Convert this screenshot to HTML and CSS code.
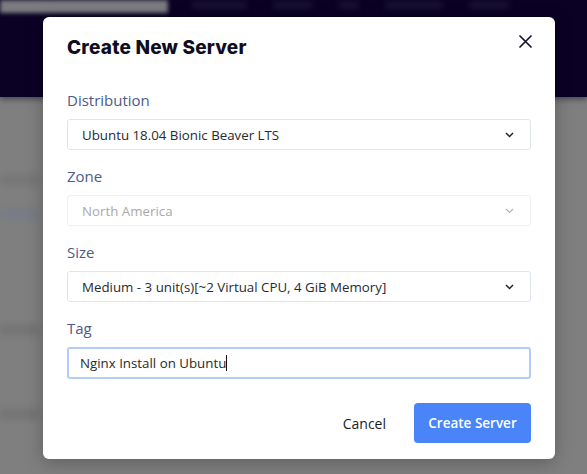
FILE: index.html
```html
<!DOCTYPE html>
<html>
<head>
<meta charset="utf-8">
<link rel="stylesheet" href="styles.css">
</head>
<body>
<div class="page">
  <div class="topbar">
    <div class="search"></div>
    <div class="nav">
      <span class="nav-item w1"></span>
      <span class="nav-item w2"></span>
      <span class="nav-item w3"></span>
      <span class="nav-item w4"></span>
      <span class="nav-item w2"></span>
    </div>
  </div>
  <div class="content">
    <div class="ghost g1"></div>
    <div class="ghost g2"></div>
    <div class="ghost g3"></div>
    <div class="ghost g4"></div>
  </div>
</div>

<div class="modal">
  <div class="modal-head">
    <h1 class="title">Create New Server</h1>
    <button class="close" aria-label="Close">
      <svg width="13" height="13" viewBox="0 0 13 13"><path d="M1 1L12 12M12 1L1 12" stroke="#15142a" stroke-width="1.7" stroke-linecap="round"/></svg>
    </button>
  </div>

  <div class="field">
    <label class="label">Distribution</label>
    <div class="select">
      <span>Ubuntu 18.04 Bionic Beaver LTS</span>
      <svg class="chev" width="9" height="6" viewBox="0 0 9 6"><path d="M1 1L4.5 4.5L8 1" fill="none" stroke="#222" stroke-width="1.5"/></svg>
    </div>
  </div>

  <div class="field">
    <label class="label">Zone</label>
    <div class="select disabled">
      <span>North America</span>
      <svg class="chev" width="9" height="6" viewBox="0 0 9 6"><path d="M1 1L4.5 4.5L8 1" fill="none" stroke="#b5b5b5" stroke-width="1.2"/></svg>
    </div>
  </div>

  <div class="field">
    <label class="label">Size</label>
    <div class="select">
      <span>Medium - 3 unit(s)[~2 Virtual CPU, 4 GiB Memory]</span>
      <svg class="chev" width="9" height="6" viewBox="0 0 9 6"><path d="M1 1L4.5 4.5L8 1" fill="none" stroke="#222" stroke-width="1.5"/></svg>
    </div>
  </div>

  <div class="field">
    <label class="label">Tag</label>
    <div class="input"><span>Nginx Install on Ubuntu</span><span class="caret"></span></div>
  </div>

  <div class="actions">
    <button class="btn-cancel">Cancel</button>
    <button class="btn-primary">Create Server</button>
  </div>
</div>
</body>
</html>
```

FILE: styles.css
```css
* { box-sizing: border-box; }
html, body { margin: 0; padding: 0; }
body {
  width: 587px;
  height: 474px;
  overflow: hidden;
  background: #7f7f7f;
  font-family: "Open Sans", "Noto Sans", sans-serif;
  position: relative;
}
.page { width: 587px; height: 474px; display: flex; flex-direction: column; }
.topbar {
  height: 97px;
  background: #0a0124;
  display: flex;
  align-items: flex-start;
  box-shadow: 0 2px 6px rgba(10,1,36,0.5);
}
.search {
  width: 168px;
  height: 13px;
  background: #7c7c80;
  filter: blur(2px);
}
.nav { display: flex; gap: 26px; padding: 2px 0 0 24px; }
.nav-item {
  display: block;
  height: 6px;
  background: #1e1838;
  filter: blur(3px);
}
.w1 { width: 55px; } .w2 { width: 40px; } .w3 { width: 20px; } .w4 { width: 58px; }
.content { flex: 1; position: relative; }
.ghost { height: 6px; background: #707070; filter: blur(4px); margin-left: 0; }
.g1 { width: 40px; margin-top: 80px; }
.g2 { width: 40px; margin-top: 28px; background: #737a8c; }
.g3 { width: 40px; margin-top: 110px; background: #6c6c6c; }
.g4 { width: 40px; margin-top: 78px; background: #6c6c6c; }

.modal {
  position: absolute;
  left: 43px;
  top: 17px;
  width: 512px;
  height: 442px;
  background: #fff;
  border-radius: 6px;
  padding: 20px 24px 16px 24px;
  box-shadow: 0 4px 18px rgba(0,0,0,0.25);
  display: flex;
  flex-direction: column;
}
.modal-head {
  display: flex;
  justify-content: space-between;
  align-items: flex-start;
  height: 53px;
}
.title {
  margin: 0;
  font-family: "Inter", sans-serif;
  font-weight: 800;
  font-size: 19px;
  color: #0e0d22;
  line-height: 22px;
  letter-spacing: 0.2px;
}
.close {
  border: 0;
  background: none;
  padding: 0;
  margin: -2px -1px 0 0;
  width: 13px;
  height: 13px;
  cursor: pointer;
}
.close svg { display: block; }
.field { display: flex; flex-direction: column; gap: 9px; margin-bottom: 16px; }
.label {
  font-size: 15px;
  color: #4c5c89;
  line-height: 20px;
  font-weight: 500;
}
.select, .input {
  height: 31px;
  border: 1px solid #dfe5ef;
  border-radius: 3px;
  display: flex;
  align-items: center;
  justify-content: space-between;
  padding: 0 16px 0 14px;
  font-size: 13.3px;
  color: #2a2a2a;
}
.select.disabled { color: #a9a9a9; border-color: #eef0f4; }
.chev { display: block; }
.input {
  height: 32px;
  border: 2px solid #b3cdfb;
  justify-content: flex-start;
  padding-left: 11px;
}
.caret { display: inline-block; width: 1px; height: 16px; background: #111; }
.actions {
  margin-top: auto;
  display: flex;
  justify-content: flex-end;
  align-items: center;
  gap: 28px;
}
.btn-cancel {
  border: 0;
  background: none;
  font-family: "Open Sans", sans-serif;
  font-size: 14px;
  color: #1c1c1c;
  padding: 0;
}
.btn-primary {
  border: 0;
  background: #4a84f9;
  color: #fff;
  border-radius: 4px;
  width: 117px;
  height: 40px;
  font-family: "Open Sans", sans-serif;
  font-weight: 600;
  font-size: 13.5px;
}
```
